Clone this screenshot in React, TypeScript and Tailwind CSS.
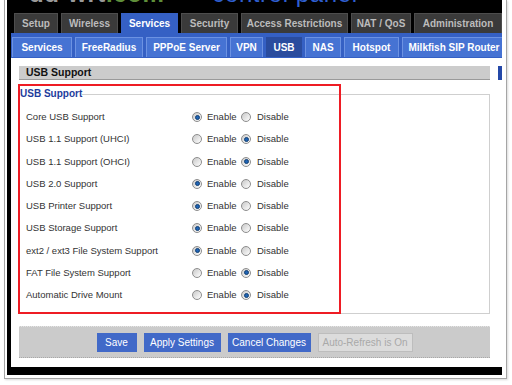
const mainTabs = [
  { label: "Setup", w: "w-[44px]" },
  { label: "Wireless", w: "w-[57px]" },
  { label: "Services", w: "w-[57px]", active: true },
  { label: "Security", w: "w-[57px]" },
  { label: "Access Restrictions", w: "w-[107px]" },
  { label: "NAT / QoS", w: "w-[60px]" },
  { label: "Administration", w: "w-[88px]" },
];

const subTabs = [
  { label: "Services", w: "w-[60px]" },
  { label: "FreeRadius", w: "w-[68px]" },
  { label: "PPPoE Server", w: "w-[81px]" },
  { label: "VPN", w: "w-[33px]" },
  { label: "USB", w: "w-[36px]", active: true },
  { label: "NAS", w: "w-[36px]" },
  { label: "Hotspot", w: "w-[55px]" },
  { label: "Milkfish SIP Router", w: "w-[104px]" },
];

const options = [
  { label: "Core USB Support", on: true },
  { label: "USB 1.1 Support (UHCI)", on: false },
  { label: "USB 1.1 Support (OHCI)", on: false },
  { label: "USB 2.0 Support", on: true },
  { label: "USB Printer Support", on: true },
  { label: "USB Storage Support", on: true },
  { label: "ext2 / ext3 File System Support", on: true },
  { label: "FAT File System Support", on: false },
  { label: "Automatic Drive Mount", on: false },
];

function Radio({ checked }: { checked: boolean }) {
  return (
    <span className="w-[10px] h-[10px] rounded-full border border-[#8d8d8d] bg-gradient-to-br from-[#c9c9c9] to-white flex items-center justify-center shrink-0">
      {checked && (
        <span className="w-[5px] h-[5px] rounded-full bg-[#1f63b4] border border-[#123f72]" />
      )}
    </span>
  );
}

export default function App() {
  return (
    <div className="w-[512px] h-[385px] bg-white overflow-hidden font-['Liberation_Sans',Arial,sans-serif]">
      {/* blog frame */}
      <div className="ml-[4px] w-[503px] h-[379px] border-l border-r border-b border-[#a5a5a5] pl-[2px] shadow-[1px_1px_2px_rgba(0,0,0,0.15)]">
        {/* screenshot */}
        <div className="w-[495px] h-[375px] bg-black flex flex-col overflow-hidden">
          {/* clipped logo, only the lower edge shows */}
          <div className="h-[13px] overflow-hidden pl-[22px] flex items-start">
            <div className="-mt-[18px] text-[24px] leading-[24px] font-bold whitespace-nowrap tracking-wide">
              <span className="text-[#9a9a9a]">dd-wrt</span>
              <span className="text-[#5f8f3a]">.com</span>
              <span className="text-[#2f5fd0] font-normal ml-[48px]">control panel</span>
            </div>
          </div>

          {/* main tabs */}
          <div className="h-[20px] pl-[7px] flex gap-[3px]">
            {mainTabs.map((t) => (
              <div
                key={t.label}
                className={`${t.w} shrink-0 flex items-center justify-center text-[10px] font-bold whitespace-nowrap ${
                  t.active
                    ? "bg-[#3560c4] text-white"
                    : "bg-[#3a3a3a] border-t border-l border-r border-[#4d4d4d] text-[#bcbcbc]"
                }`}
              >
                {t.label}
              </div>
            ))}
          </div>

          {/* sub tabs */}
          <div className="ml-[4px] h-[25px] bg-[#3560c4] pl-[1px] pt-[4px] pb-[1px] flex gap-[3px] overflow-hidden">
            {subTabs.map((t) => (
              <div
                key={t.label}
                className={`${t.w} shrink-0 flex items-center justify-center text-[10px] font-bold text-white whitespace-nowrap border-t border-l border-r ${
                  t.active
                    ? "bg-[#2a4c9e] border-[#2a4c9e]"
                    : "bg-[#4673d3] border-[#6c92e2]"
                }`}
              >
                {t.label}
              </div>
            ))}
          </div>

          {/* content */}
          <div className="ml-[4px] flex-1 bg-white relative pl-[8px] pt-[8px]">
            <div className="flex gap-[8px]">
              <div className="w-[471px] h-[14px] bg-[#cccccc] border-b border-[#9a9a9a] flex items-center pl-[7px] text-[10.5px] font-bold text-[#111]">
                USB Support
              </div>
              <div className="w-[4px] h-[14px] bg-[#2448a8]" />
            </div>

            <fieldset className="mt-[8px] w-[471px] border border-[#cfcfcf] pl-[6px] pt-[6px] pb-[7px]">
              <legend className="-ml-[6px] text-[10px] leading-[12px] font-bold text-[#1e3c9c]">
                USB Support
              </legend>
              {options.map((o) => (
                <div key={o.label} className="h-[22.25px] flex items-center text-[9.5px] text-[#333]">
                  <span className="w-[166px] shrink-0">{o.label}</span>
                  <span className="w-[49px] flex items-center gap-[5px]">
                    <Radio checked={o.on} />
                    Enable
                  </span>
                  <span className="flex items-center gap-[6px]">
                    <Radio checked={!o.on} />
                    Disable
                  </span>
                </div>
              ))}
            </fieldset>

            <div className="mt-[12px] w-[471px] h-[32px] bg-[#cbcbcb] border-t border-dotted border-[#e4e4e4] border-b-[#a8a8a8] border-b flex items-center justify-center gap-[7px]">
              <button className="w-[40px] h-[19px] bg-[#4169c8] text-white text-[10px]">Save</button>
              <button className="w-[77px] h-[19px] bg-[#4169c8] text-white text-[10px]">Apply Settings</button>
              <button className="w-[83px] h-[19px] bg-[#4169c8] text-white text-[10px]">Cancel Changes</button>
              <button className="w-[95px] h-[19px] bg-[#dcdcdc] border border-[#bdbdbd] text-[#a9a9a9] text-[10px]">
                Auto-Refresh is On
              </button>
            </div>

            {/* annotation highlight */}
            <div className="absolute left-[7px] top-[26px] w-[323px] h-[230px] border-2 border-[#ee1c24]" />
          </div>

          <div className="h-[8px] shrink-0" />
        </div>
      </div>
    </div>
  );
}
